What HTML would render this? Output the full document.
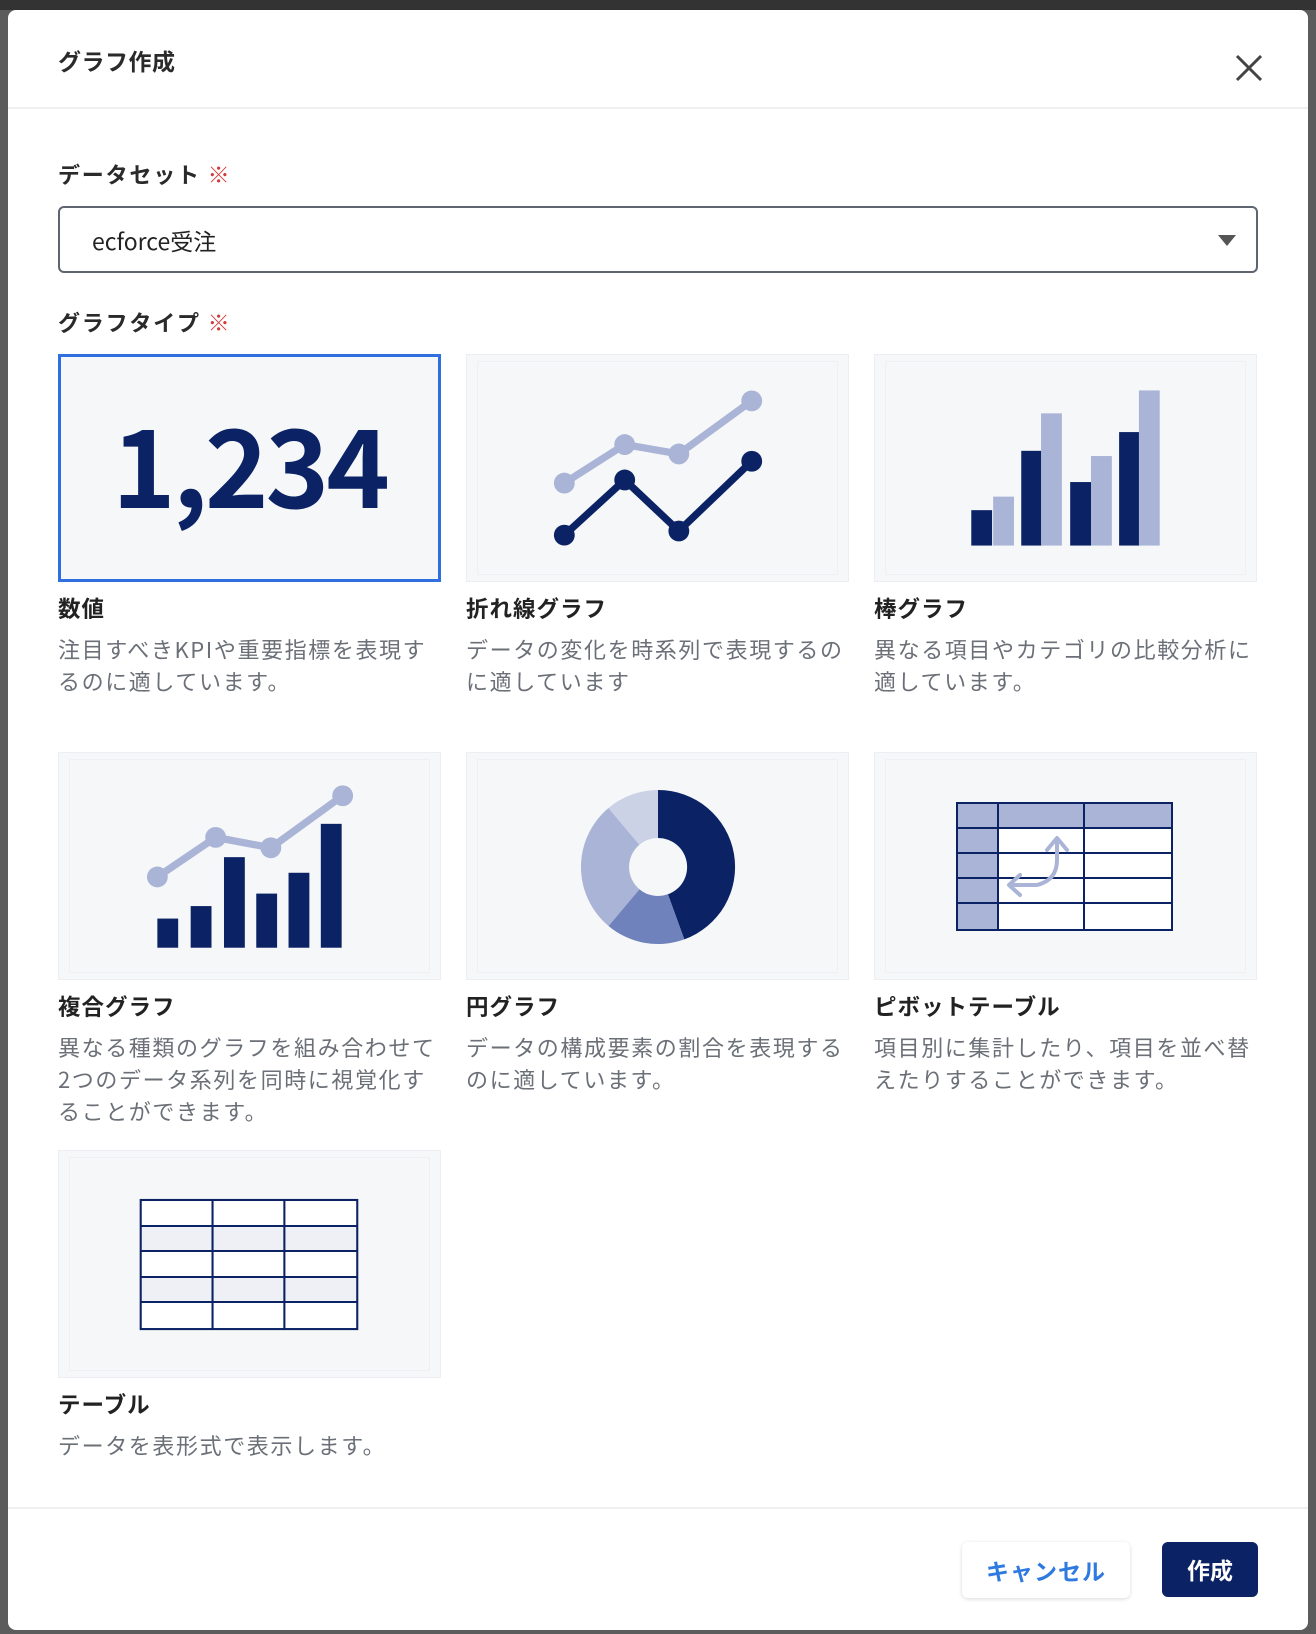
<!DOCTYPE html>
<html><head><meta charset="utf-8"><style>
*{margin:0;padding:0;box-sizing:border-box}
body{width:1316px;height:1634px;background:#5c5c5c;position:relative;overflow:hidden;font-family:"Noto Sans CJK JP","Liberation Sans",sans-serif;color:#222}
.modal{position:absolute;left:8px;top:10px;width:1300px;height:1620px;background:#fff;border-radius:8px}
.a{position:absolute;white-space:nowrap}
.lbl{font-size:22px;font-weight:bold;color:#2a2a2a;letter-spacing:1.8px;line-height:30px}
.req{color:#d23a3a;font-weight:normal}
.card{position:absolute;width:383px;height:228px;background:#f6f7f9;border:1px solid #eceef2}
.card .in{position:absolute;left:10px;top:6px;right:10px;bottom:6px;border:1px solid #eef0f3}
.card svg{position:absolute;left:-1px;top:-1px}
.sel{border:3px solid #2f6fe0}
.t{font-size:22.5px;font-weight:bold;color:#222;letter-spacing:1px;line-height:30px}
.d{font-size:22px;color:#6b6f77;line-height:32px;white-space:normal;width:388px;letter-spacing:1.6px}
</style></head><body>
<div style="position:absolute;left:0;top:0;width:1316px;height:10px;background:#333"></div>
<div class="modal"></div>
<div class="a" style="left:58px;top:45px;font-size:23px;font-weight:bold;color:#2a2a2a;line-height:30px;letter-spacing:0.5px">グラフ作成</div>
<svg class="a" style="left:1234px;top:53px" width="30" height="30" viewBox="0 0 30 30"><path d="M3 3L27 27M27 3L3 27" stroke="#444" stroke-width="3" fill="none"/></svg>
<div class="a" style="left:8px;top:107px;width:1300px;height:2px;background:#eeeff1"></div>

<div class="a lbl" style="left:58px;top:159px">データセット <span class="req">※</span></div>
<div class="a" style="left:58px;top:206px;width:1200px;height:67px;border:2px solid #5e6470;border-radius:6px"></div>
<div class="a" style="left:92px;top:224px;font-size:23px;color:#222;line-height:32px">ecforce受注</div>
<svg class="a" style="left:1218px;top:235px" width="18" height="12"><path d="M0 0H18L9 11Z" fill="#555"/></svg>

<div class="a lbl" style="left:58px;top:307px">グラフタイプ <span class="req">※</span></div>

<!-- Row1 -->
<div class="card sel" style="left:58px;top:354px"><div class="a" style="left:0;right:0;top:40px;text-align:center;font-size:108px;line-height:130px;font-weight:bold;color:#0b2265;letter-spacing:-3px">1,234</div></div>
<div class="card" style="left:466px;top:354px"><div class="in"></div>
<svg width="383" height="228" viewBox="0 0 367 219"><g fill="none" stroke-width="7" stroke-linejoin="round"><polyline points="94,124 152,87 204,96 274,45" stroke="#aab4d6"/><polyline points="94,174 152,121 204,170 274,103" stroke="#0b2265"/></g>
<g fill="#aab4d6"><circle cx="94" cy="124" r="10"/><circle cx="152" cy="87" r="10"/><circle cx="204" cy="96" r="10"/><circle cx="274" cy="45" r="10"/></g>
<g fill="#0b2265"><circle cx="94" cy="174" r="10"/><circle cx="152" cy="121" r="10"/><circle cx="204" cy="170" r="10"/><circle cx="274" cy="103" r="10"/></g></svg></div>
<div class="card" style="left:874px;top:354px"><div class="in"></div>
<svg width="383" height="228" viewBox="0 0 367 219"><g fill="#0b2265"><rect x="93" y="150" width="20" height="34"/><rect x="141" y="93" width="20" height="91"/><rect x="188" y="123" width="20" height="61"/><rect x="235" y="75" width="20" height="109"/></g><g fill="#aab4d6"><rect x="114" y="137" width="20" height="47"/><rect x="160" y="57" width="20" height="127"/><rect x="208" y="98" width="20" height="86"/><rect x="254" y="35" width="20" height="149"/></g></svg></div>

<div class="a t" style="left:58px;top:593px">数値</div>
<div class="a t" style="left:466px;top:593px">折れ線グラフ</div>
<div class="a t" style="left:874px;top:593px">棒グラフ</div>
<div class="a d" style="left:58px;top:633px">注目すべきKPIや重要指標を表現するのに適しています。</div>
<div class="a d" style="left:466px;top:633px">データの変化を時系列で表現するのに適しています</div>
<div class="a d" style="left:874px;top:633px">異なる項目やカテゴリの比較分析に適しています。</div>

<!-- Row2 -->
<div class="card" style="left:58px;top:752px"><div class="in"></div>
<svg width="383" height="228" viewBox="0 0 367 219"><g fill="#0b2265"><rect x="95" y="160" width="20" height="28"/><rect x="127" y="148" width="20" height="40"/><rect x="159" y="101" width="20" height="87"/><rect x="190" y="136" width="20" height="52"/><rect x="221" y="116" width="20" height="72"/><rect x="252" y="69" width="20" height="119"/></g>
<polyline points="95,120 151,82 204,92 273,42" fill="none" stroke="#aab4d6" stroke-width="7" stroke-linejoin="round"/><g fill="#aab4d6"><circle cx="95" cy="120" r="10"/><circle cx="151" cy="82" r="10"/><circle cx="204" cy="92" r="10"/><circle cx="273" cy="42" r="10"/></g></svg></div>
<div class="card" style="left:466px;top:752px"><div class="in"></div>
<svg width="383" height="228" viewBox="0 0 383 228">
<path d="M192 38A77 77 0 0 1 218.3 187.4L201.9 142.3A29 29 0 0 0 192 86Z" fill="#0b2265"/>
<path d="M218.3 187.4A77 77 0 0 1 142.5 174L173.4 137.2A29 29 0 0 0 201.9 142.3Z" fill="#6f82bb"/>
<path d="M142.5 174A77 77 0 0 1 142.5 56L173.4 92.8A29 29 0 0 0 173.4 137.2Z" fill="#aab4d6"/>
<path d="M142.5 56A77 77 0 0 1 192 38L192 86A29 29 0 0 0 173.4 92.8Z" fill="#ccd2e6"/></svg></div>
<div class="card" style="left:874px;top:752px"><div class="in"></div>
<svg width="383" height="228" viewBox="0 0 383 228">
<rect x="83" y="51" width="215" height="127" fill="#fff"/>
<rect x="83" y="51" width="215" height="25" fill="#aab4d6"/><rect x="83" y="51" width="41" height="127" fill="#aab4d6"/>
<g stroke="#0b2265" stroke-width="2" fill="none"><rect x="83" y="51" width="215" height="127"/><path d="M124 51V178M210 51V178M83 76H298M83 101H298M83 126H298M83 151H298"/></g>
<g stroke="#aab4d6" stroke-width="4" fill="none" stroke-linecap="round" stroke-linejoin="round"><path d="M183 88V108Q183 128 163 133H136"/><path d="M173 98L183 86L193 98"/><path d="M146 123L135 133L146 143"/></g></svg></div>

<div class="a t" style="left:58px;top:991px">複合グラフ</div>
<div class="a t" style="left:466px;top:991px">円グラフ</div>
<div class="a t" style="left:874px;top:991px">ピボットテーブル</div>
<div class="a d" style="left:58px;top:1031px;width:388px">異なる種類のグラフを組み合わせて2つのデータ系列を同時に視覚化することができます。</div>
<div class="a d" style="left:466px;top:1031px;width:392px">データの構成要素の割合を表現するのに適しています。</div>
<div class="a d" style="left:874px;top:1031px;width:392px">項目別に集計したり、項目を並べ替えたりすることができます。</div>

<!-- Row3 -->
<div class="card" style="left:58px;top:1150px"><div class="in"></div>
<svg width="383" height="228" viewBox="0 0 367 219">
<rect x="79" y="48" width="208" height="124" fill="#fff"/><rect x="79" y="73" width="208" height="24" fill="#eef0f5"/><rect x="79" y="122" width="208" height="24" fill="#eef0f5"/>
<g stroke="#0b2265" stroke-width="2" fill="none"><rect x="79" y="48" width="208" height="124"/><path d="M148 48V172M217 48V172M79 73H287M79 97H287M79 122H287M79 146H287"/></g></svg></div>
<div class="a t" style="left:58px;top:1389px">テーブル</div>
<div class="a d" style="left:58px;top:1429px">データを表形式で表示します。</div>

<div class="a" style="left:8px;top:1507px;width:1300px;height:2px;background:#eeeff1"></div>
<div class="a" style="left:962px;top:1542px;width:168px;height:56px;background:#fff;border-radius:6px;box-shadow:0 1px 4px rgba(0,0,0,.15);color:#2f7ae0;font-size:23px;font-weight:bold;text-align:center;line-height:56px;letter-spacing:1px">キャンセル</div>
<div class="a" style="left:1162px;top:1542px;width:96px;height:55px;background:#0b2265;border-radius:6px;color:#fff;font-size:23px;font-weight:bold;text-align:center;line-height:55px">作成</div>
</body></html>
